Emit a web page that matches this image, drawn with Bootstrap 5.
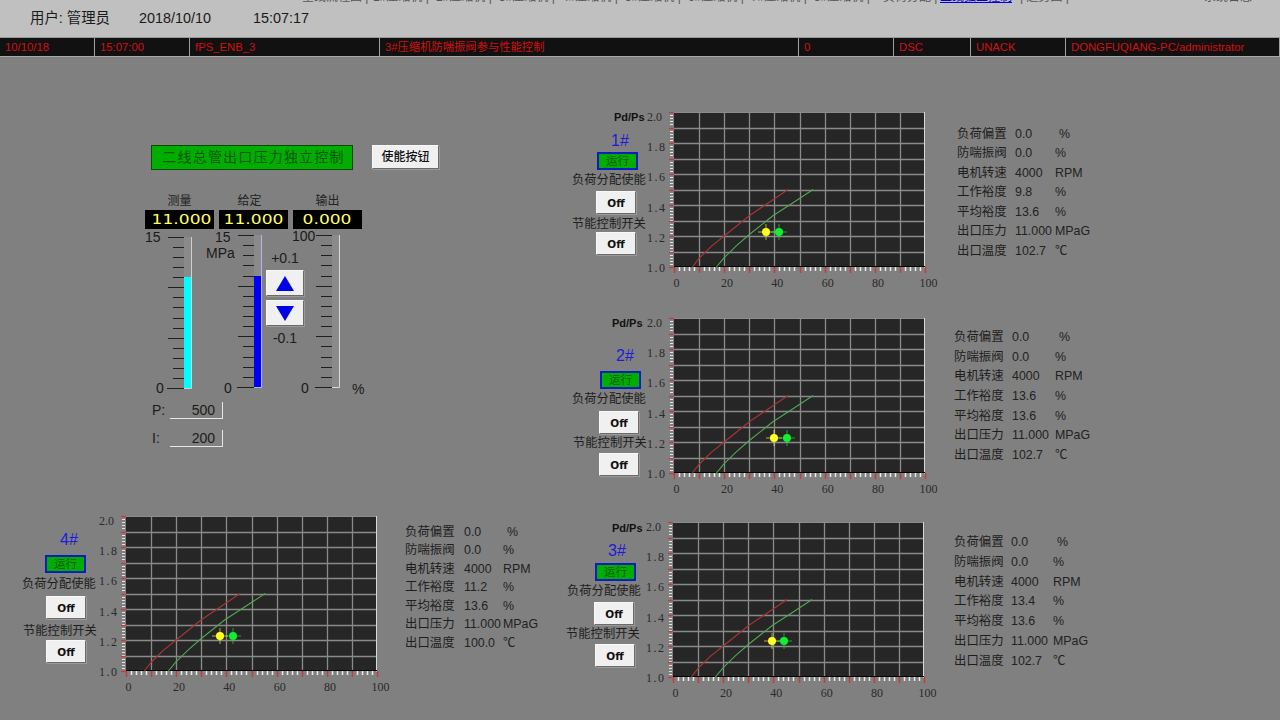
<!DOCTYPE html>
<html lang="zh-CN">

<head>
    <meta charset="UTF-8">
    <meta name="viewport" content="width=device-width, initial-scale=1.0">
    <title>二线总管出口压力独立控制</title>
    <link href="https://cdn.jsdelivr.net/npm/bootstrap@5.3.0/dist/css/bootstrap.min.css" rel="stylesheet">
    <style>
        html, body {
            height: 100%;
            overflow: hidden;
        }

        body {
            background: #808080;
            color: #1c1c1c;
            font-family: "Liberation Sans", "Noto Sans CJK SC", sans-serif;
        }

        .screen {
            width: 1280px;
            height: 720px;
        }

        /* top header */
        .top-head {
            height: 37px;
            background: #c0c0c0;
        }

        .nav-clip {
            height: 4px;
            padding-left: 302px;
            font-size: 12px;
            line-height: 16px;
            color: #555;
        }

        .nav-clip > div {
            margin-top: -11px;
            white-space: nowrap;
        }

        .nav-clip .nav-first {
            width: 71px;
        }

        .nav-clip .nav-unit {
            width: 63px;
        }

        .nav-clip .nav-split {
            width: 57px;
            margin-left: 6px;
        }

        .nav-clip .nav-live {
            width: 80px;
            color: #0000e0;
            text-decoration: underline;
        }

        .nav-clip .nav-log {
            margin-left: 135px;
        }

        .status-line {
            padding-top: 3px;
            font-size: 14.4px;
            line-height: 22px;
            color: #1a1a1a;
        }

        .status-line .st-user {
            width: 109px;
            margin-left: 30px;
        }

        .status-line .st-date {
            width: 114px;
        }

        /* alarm strip */
        .alarm-bar {
            height: 20px;
            background: #111;
            border-top: 1px solid #9a9a9a;
            border-bottom: 1px solid #a8a8a8;
            color: #d40f0f;
            font-size: 11.3px;
            line-height: 18px;
        }

        .alarm-bar > div {
            padding-left: 5px;
            border-right: 1px solid #a0a0a0;
            white-space: nowrap;
            overflow: hidden;
        }

        /* free canvas of the mimic */
        .mimic {
            height: 663px;
        }

        .pressure-panel {
            left: 145px;
            top: 88px;
            width: 300px;
        }

        .title-plate {
            width: 202px;
            height: 25px;
            margin-left: 6px;
            padding-left: 3px;
            background: #00ad00;
            border: 1px solid #0c4a0c;
            color: #0b560b;
            font-size: 14px;
            letter-spacing: 1.2px;
            line-height: 23px;
        }

        .bevel-btn {
            padding: 0;
            background: #f0f0f0;
            border: 1px solid #f8f8f8;
            border-right-color: #6a6a6a;
            border-bottom-color: #6a6a6a;
            border-radius: 0;
            color: #111;
            box-shadow: 1px 1px 0 #9a9a9a;
        }

        .enable-btn {
            width: 67px;
            height: 24px;
            margin-left: 19px;
            font-size: 12px;
            font-weight: 500;
        }

        .meter-heads {
            margin-top: 22px;
        }

        .meter-head {
            width: 69px;
            margin-right: 5px;
            font-size: 12px;
            line-height: 18px;
            color: #222;
        }

        .meter-head .meter-name {
            height: 18px;
        }

        .meter-head.shift-name .meter-name {
            padding-right: 8px;
        }

        .meter-value {
            height: 19px;
            background: #000;
            color: #ffff66;
            font-family: "DejaVu Sans", sans-serif;
            font-size: 14px;
            line-height: 19px;
            overflow: hidden;
        }

        .meter-value span {
            display: inline-block;
            transform: scaleX(1.22);
        }

        .meter-row {
            height: 172px;
            margin-top: 1px;
        }

        .meter-row svg {
            overflow: visible;
            display: block;
        }

        .meter-row text {
            font-family: "Liberation Sans", sans-serif;
            font-size: 14px;
            fill: #1a1a1a;
        }

        .step-col {
            width: 38px;
            padding-top: 20px;
            font-size: 14px;
            line-height: 16px;
        }

        .step-btn {
            width: 38px;
            height: 26px;
            margin-top: 4px;
        }

        .step-btn svg {
            display: block;
            margin: 0 auto;
        }

        .pi-row {
            height: 17px;
            margin-bottom: 11px;
            font-size: 14px;
            line-height: 17px;
        }

        .pi-name {
            width: 25px;
            padding-left: 7px;
        }

        .pi-field {
            width: 53px;
            padding-right: 7px;
            border-right: 1px solid #e6e6e6;
            border-bottom: 1px solid #e6e6e6;
        }

        /* compressor units */
        .side-col {
            flex: none;
        }

        .side-col > div,
        .side-col > button {
            flex: none;
        }

        .ratio-name {
            height: 14px;
            font-size: 11px;
            font-weight: 700;
            line-height: 14px;
            color: #111;
            white-space: nowrap;
        }

        .unit-tag {
            height: 20px;
            color: #1c1cd8;
            font-size: 16px;
            line-height: 20px;
        }

        .run-tag {
            width: 41px;
            height: 18px;
            background: #00ad00;
            border: 2px solid #0a1fc0;
            color: #0b560b;
            font-size: 11.5px;
            line-height: 14px;
        }

        .ctl-name {
            height: 16px;
            font-size: 12.3px;
            line-height: 16px;
            color: #1e1e1e;
            white-space: nowrap;
        }

        .off-btn {
            width: 40px;
            height: 23px;
            font-family: "DejaVu Sans", sans-serif;
            font-size: 10.5px;
            font-weight: 700;
            line-height: 20px;
        }

        .plot-svg {
            flex: none;
            overflow: visible;
        }

        .plot-svg text {
            font-family: "Liberation Serif", serif;
            font-size: 12px;
            fill: #2a2a2a;
        }

        .plot-svg text.y-mark {
            letter-spacing: 1.5px;
        }

        .read-grid {
            flex: none;
            font-size: 12.4px;
            color: #222;
        }

        .read-grid .read-name {
            color: #1e1e1e;
            white-space: nowrap;
        }
    </style>
</head>

<body>
    <div class="screen d-flex flex-column">
        <div class="top-head flex-none">
            <div class="nav-clip overflow-hidden">
                <div class="d-flex" id="nav-row"></div>
            </div>
            <div class="status-line d-flex">
                <div class="st-user">用户: 管理员</div>
                <div class="st-date">2018/10/10</div>
                <div>15:07:17</div>
            </div>
        </div>

        <div class="alarm-bar d-flex" id="alarm-bar"></div>

        <div class="mimic position-relative" id="mimic">
            <div class="pressure-panel position-absolute">
                <div class="d-flex">
                    <div class="title-plate text-center">二线总管出口压力独立控制</div>
                    <button class="btn bevel-btn enable-btn">使能按钮</button>
                </div>

                <div class="meter-heads d-flex">
                    <div class="meter-head text-center">
                        <div class="meter-name">测量</div>
                        <div class="meter-value ps-1"><span>11.000</span></div>
                    </div>
                    <div class="meter-head shift-name text-center">
                        <div class="meter-name">给定</div>
                        <div class="meter-value"><span>11.000</span></div>
                    </div>
                    <div class="meter-head text-center">
                        <div class="meter-name">输出</div>
                        <div class="meter-value"><span>0.000</span></div>
                    </div>
                </div>

                <div class="meter-row d-flex">
                    <div id="meter-a"></div>
                    <div id="meter-b"></div>
                    <div class="step-col text-center flex-none">
                        <div>+0.1</div>
                        <button class="btn bevel-btn step-btn">
                            <svg width="18" height="15" viewBox="0 0 18 15"><polygon points="9,0 18,15 0,15" fill="#0000e6" /></svg>
                        </button>
                        <button class="btn bevel-btn step-btn">
                            <svg width="18" height="15" viewBox="0 0 18 15"><polygon points="0,0 18,0 9,15" fill="#0000e6" /></svg>
                        </button>
                        <div class="mt-1">-0.1</div>
                    </div>
                    <div id="meter-c"></div>
                </div>

                <div class="pi-row d-flex">
                    <div class="pi-name">P:</div>
                    <div class="pi-field text-end">500</div>
                </div>
                <div class="pi-row d-flex">
                    <div class="pi-name">I:</div>
                    <div class="pi-field text-end">200</div>
                </div>
            </div>
        </div>
    </div>

    <script src="https://cdn.jsdelivr.net/npm/bootstrap@5.3.0/dist/js/bootstrap.bundle.min.js"></script>
    <script>
        const MIMIC_TOP = 57;

        // clipped menu row at the very top
        const navItems = [['nav-first', '全线流程图 |']];
        for (let i = 1; i <= 8; i++) navItems.push(['nav-unit', i + '#压缩机 |']);
        navItems.push(['nav-split', '负荷分配 |'], ['nav-live', '二线独立控制'], ['', '| 趋势图 |'], ['nav-log', '系统日志']);
        document.getElementById('nav-row').innerHTML = navItems
            .map(([cls, text]) => `<span class="${cls} flex-none">${text}</span>`).join('');

        // alarm strip columns
        const alarmCols = [[95, '10/10/18'], [95, '15:07:00'], [190, 'fPS_ENB_3'], [419, '3#压缩机防喘振阀参与性能控制'],
            [95, '0'], [77, 'DSC'], [95, 'UNACK'], [214, 'DONGFUQIANG-PC/administrator']];
        document.getElementById('alarm-bar').innerHTML = alarmCols
            .map(([w, text]) => `<div style="width:${w}px">${text}</div>`).join('');

        // vertical meters
        function meter(o) {
            let s = `<svg width="${o.width}" height="172">`;
            const top = o.top, bottom = o.bottom, step = (bottom - top) / 15;
            for (let i = 0; i <= 15; i++) {
                const y = Math.round(top + i * step) + 0.5;
                const major = i % 5 === 0;
                const x1 = i === 15 ? o.barX - 17 : (major ? o.barX - 16 : o.barX - 11);
                s += `<line x1="${x1}" y1="${y}" x2="${o.barX}" y2="${y}" stroke="#1e1e1e" />`;
            }
            s += `<rect x="${o.barX}" y="${top}" width="8" height="${bottom - top}" fill="#8a8a8a" />`;
            if (o.fill) {
                s += `<rect x="${o.barX}" y="${o.fillTop}" width="7" height="${bottom - o.fillTop}" fill="${o.fill}" />`;
            }
            s += `<path d="M${o.barX + 7.5} ${top}V${bottom + 0.5}H${o.barX}" fill="none" stroke="${o.edge}" />`;
            o.labels.forEach(([t, x, y]) => {
                s += `<text x="${x}" y="${y}" dominant-baseline="central">${t}</text>`;
            });
            return s + '</svg>';
        }

        document.getElementById('meter-a').innerHTML = meter({
            width: 74, barX: 39, top: 7, bottom: 158, fillTop: 47, fill: '#00ffff', edge: '#cfcfcf',
            labels: [['15', 0, 7], ['0', 11, 158]]
        });
        document.getElementById('meter-b').innerHTML = meter({
            width: 47, barX: 35, top: 5, bottom: 157, fillTop: 46, fill: '#0000f0', edge: '#b4b4f0',
            labels: [['15', -4, 7], ['MPa', -13, 23], ['0', 5, 158]]
        });
        document.getElementById('meter-c').innerHTML = meter({
            width: 61, barX: 28, top: 5, bottom: 157, edge: '#d8d8d8',
            labels: [['100', -12, 6], ['0', -3, 158], ['%', 48, 159]]
        });

        // compressor units, coordinates as laid out on the mimic
        const units = [
            {
                name: '1#', plotX: 674, plotY: 112, sideX: 572, readX: 957, readY: 124.5, rowH: 19.6, cols: [58, 40],
                yellow: 92, green: 105, dotY: 120,
                side: { ratio: [614, 110], tag: [611, 131], run: [597, 152], c1: [572, 172], b1: [596, 191], c2: [572, 216], b2: [596, 232] },
                values: ['0.0', '0.0', '4000', '9.8', '13.6', '11.000', '102.7']
            },
            {
                name: '2#', plotX: 674, plotY: 318, sideX: 572, readX: 954, readY: 328, rowH: 19.7, cols: [58, 43],
                yellow: 100, green: 113, dotY: 120,
                side: { ratio: [612, 316], tag: [616, 346], run: [600, 371], c1: [572, 391], b1: [599, 411], c2: [573, 435], b2: [599, 453] },
                values: ['0.0', '0.0', '4000', '13.6', '13.6', '11.000', '102.7']
            },
            {
                name: '3#', plotX: 673, plotY: 522, sideX: 566, readX: 954, readY: 533, rowH: 19.8, cols: [57, 42],
                yellow: 99, green: 111, dotY: 119,
                side: { ratio: [612, 521], tag: [608, 541], run: [595, 563], c1: [567, 583], b1: [594, 602], c2: [566, 626], b2: [595, 644] },
                values: ['0.0', '0.0', '4000', '13.4', '13.6', '11.000', '102.7']
            },
            {
                name: '4#', plotX: 126, plotY: 516, sideX: 22, readX: 405, readY: 522.5, rowH: 18.6, cols: [59, 39],
                yellow: 94, green: 107, dotY: 120,
                side: { tag: [60, 530], run: [45, 555], c1: [22, 576], b1: [46, 596], c2: [23, 623], b2: [46, 640] },
                values: ['0.0', '0.0', '4000', '11.2', '13.6', '11.000', '100.0']
            }
        ];

        const PLOT_W = 251, PLOT_H = 155;
        const redCurve = [[7.3, 1], [10.2, 1.06], [15, 1.135], [20, 1.2], [30, 1.33], [36.8, 1.405], [45.4, 1.5]];
        const greenCurve = [[16.9, 1], [20, 1.06], [25, 1.14], [30, 1.21], [39.4, 1.33], [47.4, 1.415], [55.4, 1.5]];
        const readNames = ['负荷偏置', '防喘振阀', '电机转速', '工作裕度', '平均裕度', '出口压力', '出口温度'];
        const readUnits = ['%', '%', 'RPM', '%', '%', 'MPaG', '℃'];

        function curvePoints(curve) {
            return curve.map(([x, y]) => `${(x * PLOT_W / 100).toFixed(1)},${((2 - y) * PLOT_H).toFixed(1)}`).join(' ');
        }

        function marker(x, y, color) {
            return `<path d="M${x - 8} ${y}H${x + 8}M${x} ${y - 8}V${y + 8}" stroke="${color}" stroke-opacity=".65" />` +
                `<circle cx="${x}" cy="${y}" r="4" fill="${color}" />`;
        }

        function plot(u) {
            let s = `<svg class="plot-svg" width="${PLOT_W}" height="${PLOT_H}">`;
            s += `<rect width="${PLOT_W}" height="${PLOT_H}" fill="#262626" />`;
            for (let i = 1; i < 10; i++) {
                const x = Math.round(i * PLOT_W / 10) + 0.5;
                const y = Math.round(i * PLOT_H / 10) + 0.5;
                s += `<path d="M${x} 0V${PLOT_H}M0 ${y}H${PLOT_W}" stroke="#8a8a8a" stroke-width="1.3" />`;
            }
            s += `<path d="M0 .5H${PLOT_W}" stroke="#8c8c8c" />`;
            s += `<path d="M${PLOT_W - 0.5} 0V${PLOT_H + 1}" stroke="#d8d8d8" />`;
            s += `<path d="M0 ${PLOT_H - 0.5}H${PLOT_W}" stroke="#000" />`;
            // ticks on the y axis
            for (let y = 0; y <= PLOT_H; y += 3.1) {
                s += `<line x1="-4" x2="-1" y1="${Math.round(y) + 0.5}" y2="${Math.round(y) + 0.5}" stroke="#e4e4e4" />`;
            }
            for (let i = 0; i <= 10; i++) {
                const y = Math.round(i * PLOT_H / 10) + 0.5;
                s += `<line x1="-5" x2="0" y1="${y}" y2="${y}" stroke="#c8383c" stroke-width="1.3" />`;
            }
            // ticks on the x axis
            for (let i = 0; i <= 50; i++) {
                const x = Math.round(i * PLOT_W / 50) + 0.5;
                const major = i % 5 === 0;
                s += `<line x1="${x}" x2="${x}" y1="${PLOT_H}" y2="${PLOT_H + (major ? 6 : 4)}" stroke="${major ? '#c8383c' : '#ececec'}" stroke-width="1.5" />`;
            }
            s += `<polyline points="${curvePoints(redCurve)}" fill="none" stroke="#a83434" stroke-width="1.2" />`;
            s += `<polyline points="${curvePoints(greenCurve)}" fill="none" stroke="#4eaa4e" stroke-width="1.1" />`;
            s += marker(u.yellow, u.dotY, '#ffff20') + marker(u.green, u.dotY, '#10f030');
            ['2.0', '1.8', '1.6', '1.4', '1.2', '1.0'].forEach((t, i) => {
                s += `<text class="${i ? 'y-mark' : ''}" x="-27" y="${5 + i * 30.2}" dominant-baseline="central">${t}</text>`;
            });
            [0, 20, 40, 60, 80, 100].forEach((t, i) => {
                s += `<text x="${2.5 + i * 50.4}" y="${PLOT_H + 16}" text-anchor="middle" dominant-baseline="central">${t}</text>`;
            });
            return s + '</svg>';
        }

        function sideColumn(u) {
            const rows = [
                ['ratio', 'ratio-name', 'Pd/Ps', 14, 'div'],
                ['tag', 'unit-tag', u.name, 20, 'div'],
                ['run', 'run-tag text-center', '运行', 18, 'div'],
                ['c1', 'ctl-name', '负荷分配使能', 16, 'div'],
                ['b1', 'btn bevel-btn off-btn', 'Off', 23, 'button'],
                ['c2', 'ctl-name', '节能控制开关', 16, 'div'],
                ['b2', 'btn bevel-btn off-btn', 'Off', 23, 'button']
            ];
            let cursor = u.plotY, html = '';
            rows.forEach(([key, cls, text, h, tag]) => {
                const at = u.side[key];
                if (!at) return;
                html += `<${tag} class="${cls}" style="margin:${at[1] - cursor}px 0 0 ${at[0] - u.sideX}px">${text}</${tag}>`;
                cursor = at[1] + h;
            });
            return `<div class="side-col d-flex flex-column align-items-start" style="width:${u.plotX - u.sideX}px">${html}</div>`;
        }

        function readouts(u) {
            const rows = readNames.map((name, i) => `
                <div class="d-flex" style="height:${u.rowH}px;line-height:${u.rowH}px">
                    <div class="read-name" style="width:${u.cols[0]}px">${name}</div>
                    <div style="width:${u.cols[1]}px">${u.values[i]}</div>
                    <div class="${i === 0 ? 'ms-1' : ''}">${readUnits[i]}</div>
                </div>`).join('');
            const gap = u.readX - u.plotX - PLOT_W;
            return `<div class="read-grid" style="margin:${u.readY - u.plotY}px 0 0 ${gap}px">${rows}</div>`;
        }

        const mimic = document.getElementById('mimic');
        units.forEach(u => {
            const el = document.createElement('div');
            el.className = 'position-absolute d-flex align-items-start';
            el.style.left = u.sideX + 'px';
            el.style.top = (u.plotY - MIMIC_TOP) + 'px';
            el.innerHTML = sideColumn(u) + plot(u) + readouts(u);
            mimic.appendChild(el);
        });
    </script>
</body>

</html>
